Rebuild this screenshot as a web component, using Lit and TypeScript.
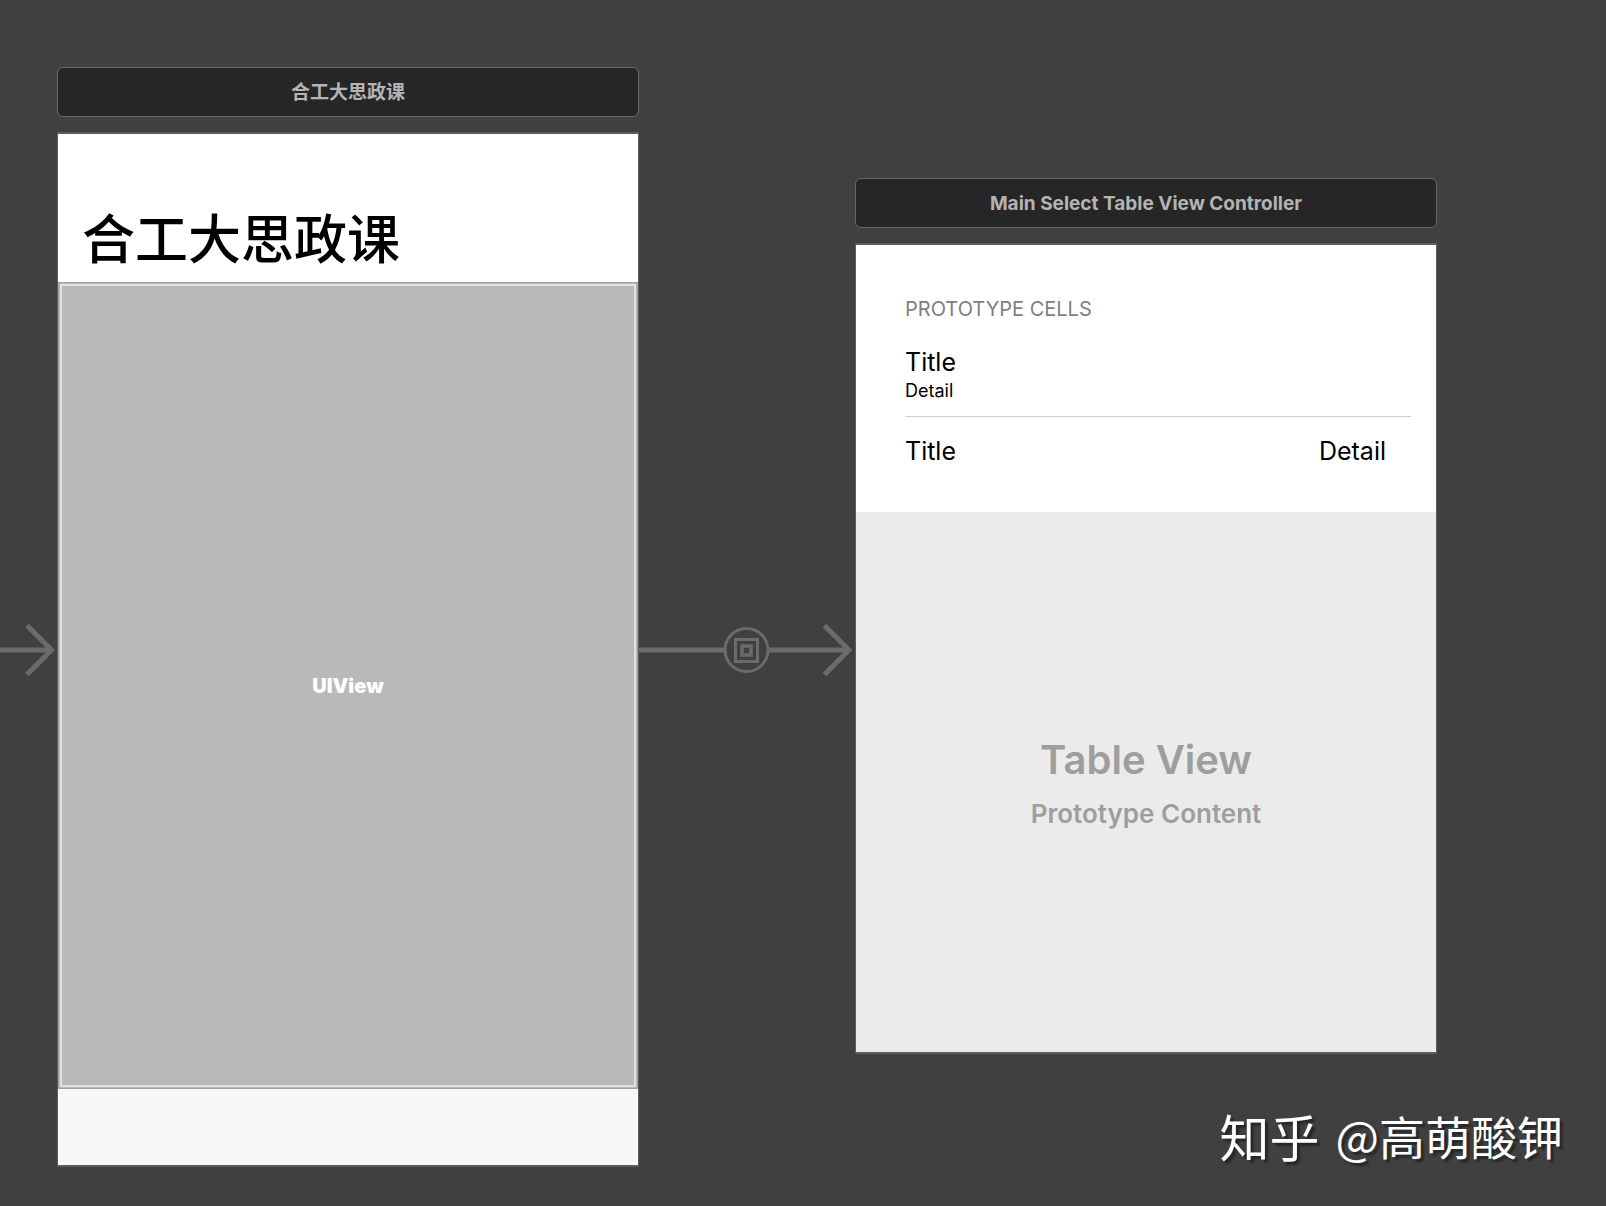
import { LitElement, html, css } from "lit";
import { customElement, property } from "lit/decorators.js";

/** Rounded bar with the scene's name, above each device canvas. */
@customElement("scene-title")
class SceneTitle extends LitElement {
  @property() label = "";

  static styles = css`
    :host {
      display: block;
    }
    .bar {
      box-sizing: border-box;
      height: 50px;
      margin: 0;
      padding-top: 2px;
      display: flex;
      align-items: center;
      justify-content: center;
      border: 1px solid #686868;
      border-radius: 6px;
      background: #262626;
      color: #b4b4b4;
      font-size: 19px;
      line-height: 24px;
      font-weight: 700;
    }
  `;

  render() {
    return html`<h2 class="bar">${this.label}</h2>`;
  }
}

@customElement("app-root")
class AppRoot extends LitElement {
  static styles = css`
    :host {
      display: block;
      font-family: Inter, "Noto Sans CJK SC", sans-serif;
    }
    .canvas {
      position: relative;
      box-sizing: border-box;
      min-height: 100vh;
      padding: 67px 0 39px;
      display: grid;
      grid-template-columns: 57px minmax(0, 1fr) 216px minmax(0, 1fr) 169px;
      background: #404040;
      overflow: hidden;
    }
    .scene {
      display: flex;
      flex-direction: column;
      gap: 15px;
    }
    .scene.inset {
      margin: 111px 0 113px;
    }
    .device {
      flex: 1;
      display: flex;
      flex-direction: column;
      border: 1px solid #5e5e5e;
      border-width: 2px 1px;
      background: #fff;
    }
    .arrow {
      align-self: center;
      margin-top: 66px;
      display: block;
      fill: none;
      stroke: #6b6b6b;
    }
    .nav-title {
      margin: 0;
      padding: 74px 24px 10px;
      font-size: 53px;
      line-height: 64px;
      font-weight: 500;
      color: #000;
    }
    .view {
      flex: 1;
      display: flex;
      align-items: center;
      justify-content: center;
      border: 1px solid #a0a0a0;
      outline: 2px solid #e2e2e2;
      outline-offset: -4px;
      background: #b9b9b9;
      color: #fff;
      font-size: 20px;
      line-height: 24px;
      font-weight: 900;
    }
    .toolbar {
      height: 76px;
      background: #f7f7f7;
    }
    .cells {
      padding: 50px 25px 33px 49px;
      color: #000;
      font-size: 25px;
      line-height: 32px;
    }
    .section {
      margin: 0;
      padding-bottom: 23px;
      font-size: 20px;
      line-height: 28px;
      font-weight: 400;
      color: #808080;
    }
    .list {
      margin: 0;
      padding: 0;
      list-style: none;
    }
    .cell {
      display: flex;
      flex-direction: column;
      gap: 1px;
    }
    .cell.subtitle {
      padding-bottom: 13px;
      border-bottom: 1px solid #cfcfcf;
    }
    .cell.value {
      flex-direction: row;
      justify-content: space-between;
      padding: 18px 25px 12px 0;
    }
    .small {
      font-size: 18px;
      line-height: 24px;
    }
    .placeholder {
      flex: 1;
      display: flex;
      flex-direction: column;
      align-items: center;
      justify-content: center;
      gap: 12px;
      background: #ebebeb;
      color: #9e9e9e;
      font-weight: 600;
    }
    .kind {
      font-size: 40px;
      line-height: 52px;
    }
    .content {
      font-size: 26px;
      line-height: 32px;
    }
    .watermark {
      position: absolute;
      right: 43px;
      bottom: 39px;
      display: flex;
      align-items: center;
      gap: 16px;
      font-family: "Noto Sans CJK SC", sans-serif;
      font-size: 46px;
      line-height: 64px;
      color: #fff;
      text-shadow: 3px 3px 2px #262626;
    }
    .brand {
      font-size: 50px;
    }
  `;

  render() {
    return html`
      <main class="canvas">
        <svg class="arrow" width="57" height="60" viewBox="0 0 57 60" aria-hidden="true">
          <path d="M0 30H51" stroke-width="5" />
          <path d="M27 5.500L51.500 30L27 54.500" stroke-width="5" />
        </svg>

        <section class="scene">
          <scene-title label="合工大思政课"></scene-title>
          <div class="device">
            <h1 class="nav-title">合工大思政课</h1>
            <div class="view">UIView</div>
            <div class="toolbar"></div>
          </div>
        </section>

        <svg class="arrow" width="216" height="60" viewBox="0 0 216 60" aria-hidden="true">
          <path d="M0 30H86M129 30H209" stroke-width="5" />
          <path d="M185.500 5.500L210 30L185.500 54.500" stroke-width="5" />
          <circle cx="107.500" cy="30" r="21.500" stroke-width="3" />
          <rect x="96.500" y="19.500" width="22" height="22" stroke-width="3" />
          <rect x="103" y="26" width="9" height="9" stroke-width="3.500" />
        </svg>

        <section class="scene inset">
          <scene-title label="Main Select Table View Controller"></scene-title>
          <div class="device">
            <div class="cells">
              <h3 class="section">PROTOTYPE CELLS</h3>
              <ul class="list">
                <li class="cell subtitle">
                  <span>Title</span>
                  <span class="small">Detail</span>
                </li>
                <li class="cell value">
                  <span>Title</span>
                  <span>Detail</span>
                </li>
              </ul>
            </div>
            <div class="placeholder">
              <span class="kind">Table View</span>
              <span class="content">Prototype Content</span>
            </div>
          </div>
        </section>

        <div class="watermark">
          <span class="brand">知乎</span>
          <span>@高萌酸钾</span>
        </div>
      </main>
    `;
  }
}
